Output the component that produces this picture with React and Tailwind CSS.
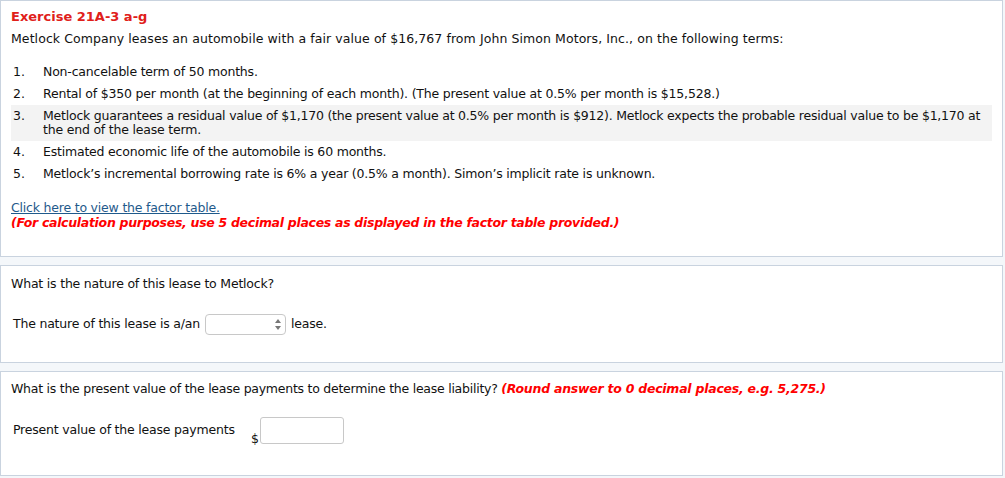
import React from "react";

const font = { fontFamily: '"DejaVu Sans", Verdana, sans-serif' };

function Item({ n, children, shaded }) {
  return (
    <div className={`flex py-[4px] pl-[2px] leading-[14px] ${shaded ? "bg-[#f3f3f3]" : ""}`}>
      <div className="w-[30px] shrink-0 tracking-normal">{n}.</div>
      <div>{children}</div>
    </div>
  );
}

export default function App() {
  return (
    <div style={font} className="w-[1005px] h-[478px] bg-[#f4f7fa] text-[12.5px] tracking-[-0.2px] text-[#111] overflow-hidden">
      <div className="w-[1003px] flex flex-col gap-[8px]">
        <div className="h-[257px] border border-[#c9d3df] bg-white px-[10px] pt-[9px]">
          <div className="text-[#e0201a] font-bold leading-[14px] text-[13px] tracking-normal">Exercise 21A-3 a-g</div>
          <div className="leading-[14px] mt-[8px] tracking-[0.08px]">
            Metlock Company leases an automobile with a fair value of $16,767 from John Simon Motors, Inc., on the following terms:
          </div>
          <div className="mt-[15px]">
            <Item n={1}>Non-cancelable term of 50 months.</Item>
            <Item n={2}>Rental of $350 per month (at the beginning of each month). (The present value at 0.5% per month is $15,528.)</Item>
            <Item n={3} shaded>
              <div className="whitespace-nowrap tracking-[-0.22px]">
                Metlock guarantees a residual value of $1,170 (the present value at 0.5% per month is $912). Metlock expects the probable residual value to be $1,170 at
              </div>
              <div>the end of the lease term.</div>
            </Item>
            <Item n={4}>Estimated economic life of the automobile is 60 months.</Item>
            <Item n={5}>Metlock’s incremental borrowing rate is 6% a year (0.5% a month). Simon’s implicit rate is unknown.</Item>
          </div>
          <div className="mt-[15px] leading-[15px]">
            <a className="text-[#1f5a8b] underline">Click here to view the factor table.</a>
          </div>
          <div className="text-[#ff0000] italic font-bold leading-[15px] tracking-[-0.3px]">
            (For calculation purposes, use 5 decimal places as displayed in the factor table provided.)
          </div>
        </div>

        <div className="h-[98px] border border-[#c9d3df] bg-white px-[10px] pt-[11px]">
          <div className="leading-[14px]">What is the nature of this lease to Metlock?</div>
          <div className="mt-[23px] ml-[2px] flex items-center gap-[5px]">
            <span>The nature of this lease is a/an</span>
            <div className="relative w-[81px] h-[21px] border border-[#c8c8c8] rounded-[4px] bg-white">
              <svg className="absolute right-[4px] top-[4px]" width="6" height="11" viewBox="0 0 6 11">
                <path d="M3 0 L6 4 L0 4 Z" fill="#777" />
                <path d="M0 7 L6 7 L3 11 Z" fill="#777" />
              </svg>
            </div>
            <span>lease.</span>
          </div>
        </div>

        <div className="h-[105px] border border-[#c9d3df] bg-white px-[10px] pt-[10px]">
          <div className="leading-[14px] tracking-[-0.25px]">
            What is the present value of the lease payments to determine the lease liability?{" "}
            <span className="text-[#ff0000] italic font-bold">(Round answer to 0 decimal places, e.g. 5,275.)</span>
          </div>
          <div className="mt-[21px] ml-[2px] flex items-start">
            <span className="w-[238px] leading-[14px] pt-[6px]">Present value of the lease payments</span>
            <span className="self-end leading-[14px] mb-[-2px] mr-[1px]">$</span>
            <div className="w-[84px] h-[27px] border border-[#c8c8c8] rounded-[3px] bg-white" />
          </div>
        </div>
      </div>
    </div>
  );
}
